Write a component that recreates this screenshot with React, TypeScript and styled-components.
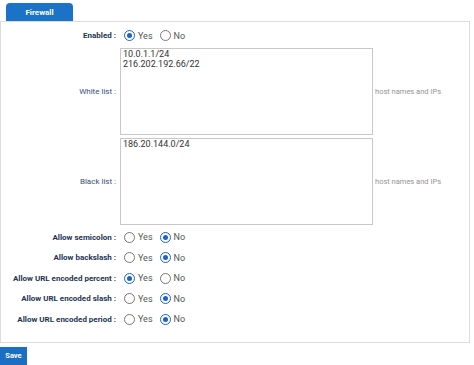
import styled, { createGlobalStyle } from "styled-components"

const Global = createGlobalStyle`
  html, body {
    margin: 0;
    padding: 0;
    background: #fff;
    font-family: Roboto, "Liberation Sans", sans-serif;
  }
`

const Page = styled.div`
  width: 474px;
  height: 365px;
  overflow: hidden;
  padding-top: 3px;
  box-sizing: border-box;
`

const Tabs = styled.div`
  display: flex;
  padding-left: 6px;
`

const Tab = styled.div`
  width: 67px;
  height: 18px;
  background: #1a73c6;
  border-radius: 4px 4px 0 0;
  color: #fff;
  font-size: 8px;
  font-weight: 700;
  display: flex;
  align-items: center;
  justify-content: center;
`

const Panel = styled.div`
  width: 470px;
  box-sizing: border-box;
  border: 1px solid #dcdcdc;
  padding: 5px 0 14px;
  display: grid;
  grid-template-columns: 115px auto 1fr;
  column-gap: 4px;
  row-gap: 3.5px;
  align-items: center;
`

const Label = styled.div<{ $bold?: boolean }>`
  text-align: right;
  font-size: 8px;
  font-weight: ${p => (p.$bold ? 700 : 400)};
  color: ${p => (p.$bold ? "#1d3353" : "#34507a")};
  white-space: nowrap;
`

const Radios = styled.div`
  grid-column: 2 / 4;
  display: flex;
  align-items: center;
  gap: 7px;
  height: 17px;
  padding-left: 4px;
`

const Option = styled.label`
  display: flex;
  align-items: center;
  gap: 3px;
  font-size: 9px;
  color: #555;
`

const Circle = styled.span<{ $on?: boolean }>`
  width: 11px;
  height: 11px;
  box-sizing: border-box;
  border-radius: 50%;
  border: 1.5px solid ${p => (p.$on ? "#1a64c8" : "#777")};
  display: flex;
  align-items: center;
  justify-content: center;
  &::after {
    content: "";
    display: ${p => (p.$on ? "block" : "none")};
    width: 5px;
    height: 5px;
    border-radius: 50%;
    background: #1a64c8;
  }
`

const Area = styled.div`
  width: 253px;
  height: 87px;
  box-sizing: border-box;
  border: 1px solid #c8c8c8;
  padding: 0 2px;
  font-size: 9px;
  line-height: 10px;
  color: #333;
  white-space: pre;
`

const Hint = styled.div`
  font-size: 7.5px;
  color: #939393;
  margin-left: -2px;
`

const Save = styled.button`
  margin-top: 4px;
  width: 27px;
  height: 18px;
  border: none;
  padding: 0;
  background: #1a6fc4;
  color: #fff;
  font-family: Roboto, "Liberation Sans", sans-serif;
  font-size: 7.5px;
  font-weight: 700;
  display: block;
`

const Radio = ({ value }: { value: boolean }) => (
  <Radios>
    <Option>
      <Circle $on={value} />
      Yes
    </Option>
    <Option>
      <Circle $on={!value} />
      No
    </Option>
  </Radios>
)

const flags: [string, boolean][] = [
  ["Allow semicolon :", false],
  ["Allow backslash :", false],
  ["Allow URL encoded percent :", true],
  ["Allow URL encoded slash :", false],
  ["Allow URL encoded period :", false],
]

export default function App() {
  return (
    <Page>
      <Global />
      <Tabs>
        <Tab>Firewall</Tab>
      </Tabs>
      <Panel>
        <Label $bold>Enabled :</Label>
        <Radio value={true} />
        <Label>White list :</Label>
        <Area>{"10.0.1.1/24\n216.202.192.66/22"}</Area>
        <Hint>host names and IPs</Hint>
        <Label>Black list :</Label>
        <Area>{"186.20.144.0/24"}</Area>
        <Hint>host names and IPs</Hint>
        {flags.map(([l, v]) => (
          <>
            <Label $bold key={l}>{l}</Label>
            <Radio value={v} />
          </>
        ))}
      </Panel>
      <Save>Save</Save>
    </Page>
  )
}
